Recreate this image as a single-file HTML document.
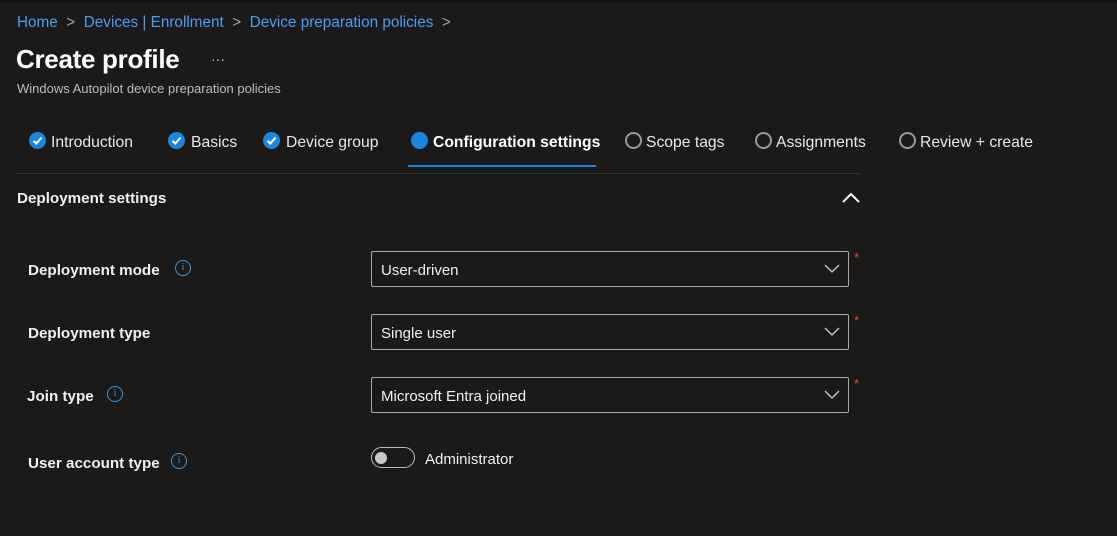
<!DOCTYPE html>
<html><head><meta charset="utf-8"><style>
body{margin:0;width:1117px;height:536px;background:#1b1a19;font-family:"Liberation Sans",sans-serif;color:#fff;position:relative;overflow:hidden}
.a{position:absolute;white-space:nowrap}
.bc{color:#479ef5;font-size:15.3px;top:14px}
.sep{color:#a0a0a0}
.tab{font-size:15.7px;top:134px;color:#e8e8e8}
.ck{position:absolute;width:17px;height:17px;border-radius:50%;background:#1a86e0;top:132px}
.oc{position:absolute;width:13px;height:13px;border-radius:50%;border:2px solid #9a9a9a;top:132px}
.lbl{font-size:15.2px;font-weight:bold;color:#f0f0f0}
.info{position:absolute;width:14px;height:14px;border:1.3px solid #3a96dd;border-radius:50%;color:#3a96dd;font-size:10px;text-align:center;line-height:14px;font-family:"Liberation Serif",serif}
.dd{position:absolute;left:371px;width:476px;height:34px;border:1px solid #a8a8a8;border-radius:2px}
.dd span{position:absolute;left:9px;top:10px;font-size:15px;color:#f0f0f0}
.dd svg{position:absolute;right:8px;top:12px}
.st{position:absolute;left:854px;color:#e05030;font-size:13px}
</style></head><body>
<div class="a" style="left:0;top:0;width:1117px;height:3px;background:#111"></div>
<div class="a bc" style="left:17px">Home <span class="sep">&nbsp;&gt;&nbsp;</span> Devices | Enrollment <span class="sep">&nbsp;&gt;&nbsp;</span> Device preparation policies <span class="sep">&nbsp;&gt;</span></div>
<div class="a" style="left:16px;top:44px;font-size:26px;font-weight:bold;letter-spacing:-0.3px">Create profile</div>
<div class="a" style="left:211px;top:51px;font-size:14px;color:#ccc">···</div>
<div class="a" style="left:17px;top:81px;font-size:13px;color:#bdbdbd">Windows Autopilot device preparation policies</div>

<div class="ck" style="left:29px"><svg width="17" height="17"><path d="M4.5 8.8l2.8 2.7 5.3-6" stroke="#fff" stroke-width="2" fill="none"/></svg></div>
<div class="a tab" style="left:51px">Introduction</div>
<div class="ck" style="left:168px"><svg width="17" height="17"><path d="M4.5 8.8l2.8 2.7 5.3-6" stroke="#fff" stroke-width="2" fill="none"/></svg></div>
<div class="a tab" style="left:191px">Basics</div>
<div class="ck" style="left:263px"><svg width="17" height="17"><path d="M4.5 8.8l2.8 2.7 5.3-6" stroke="#fff" stroke-width="2" fill="none"/></svg></div>
<div class="a tab" style="left:286px">Device group</div>
<div class="ck" style="left:411px"></div>
<div class="a tab" style="left:433px;font-weight:bold;color:#fff">Configuration settings</div>
<div class="a" style="left:408px;top:165px;width:188px;height:2px;background:#1a86e0"></div>
<div class="oc" style="left:625px"></div>
<div class="a tab" style="left:646px">Scope tags</div>
<div class="oc" style="left:755px"></div>
<div class="a tab" style="left:776px">Assignments</div>
<div class="oc" style="left:899px"></div>
<div class="a tab" style="left:920px">Review + create</div>
<div class="a" style="left:15px;top:173px;width:845px;height:1px;background:#333"></div>

<div class="a lbl" style="left:17px;top:190px">Deployment settings</div>
<svg class="a" style="left:841px;top:192px" width="20" height="12"><path d="M2 10l8-8 8 8" stroke="#fff" stroke-width="2" fill="none"/></svg>

<div class="a lbl" style="left:28px;top:262px">Deployment mode</div>
<div class="info" style="left:175px;top:260px">i</div>
<div class="dd" style="top:251px"><span>User-driven</span><svg width="16" height="10"><path d="M1 1l7 7 7-7" stroke="#ccc" stroke-width="1.3" fill="none"/></svg></div>
<div class="st" style="top:250px">*</div>

<div class="a lbl" style="left:28px;top:325px">Deployment type</div>
<div class="dd" style="top:314px"><span>Single user</span><svg width="16" height="10"><path d="M1 1l7 7 7-7" stroke="#ccc" stroke-width="1.3" fill="none"/></svg></div>
<div class="st" style="top:313px">*</div>

<div class="a lbl" style="left:27px;top:388px">Join type</div>
<div class="info" style="left:107px;top:386px">i</div>
<div class="dd" style="top:377px"><span>Microsoft Entra joined</span><svg width="16" height="10"><path d="M1 1l7 7 7-7" stroke="#ccc" stroke-width="1.3" fill="none"/></svg></div>
<div class="st" style="top:376px">*</div>

<div class="a lbl" style="left:28px;top:455px">User account type</div>
<div class="info" style="left:171px;top:453px">i</div>
<div class="a" style="left:371px;top:447px;width:42px;height:19px;border:1px solid #bbb;border-radius:11px"></div>
<div class="a" style="left:375px;top:452px;width:12px;height:12px;border-radius:50%;background:#c8c8c8"></div>
<div class="a" style="left:425px;top:451px;font-size:15px;color:#f0f0f0">Administrator</div>
</body></html>
